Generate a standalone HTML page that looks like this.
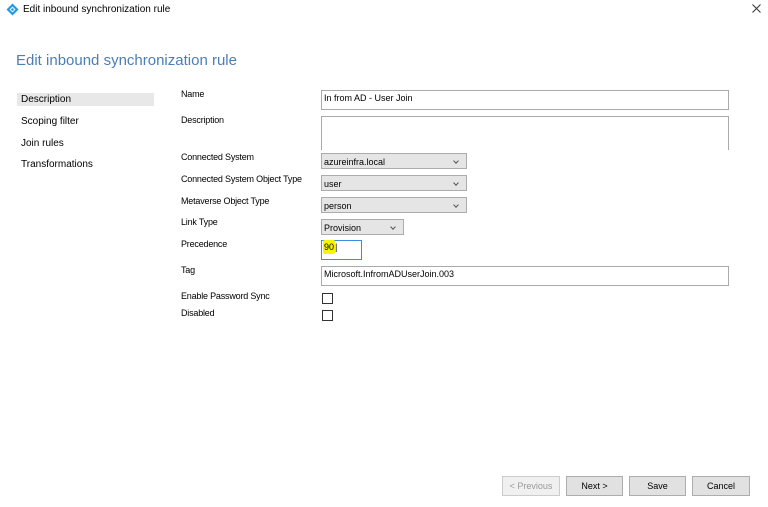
<!DOCTYPE html><html><head><style>
body{margin:0;width:768px;height:507px;background:#fff;font-family:"Liberation Sans",sans-serif;position:relative;overflow:hidden;color:#000}
.a{position:absolute;white-space:nowrap}
.l{font-size:9px;letter-spacing:-0.2px}
.n{font-size:10px}
.box{position:absolute;border:1px solid #aaa;background:#fff;box-sizing:border-box;font-size:9px;padding:2px 2px}
.dd{position:absolute;border:1px solid #acacac;background:#e5e5e5;box-sizing:border-box;font-size:9px;padding:3px 2px}
.dd:after{content:"";position:absolute;right:8px;top:5px;width:3px;height:3px;border-right:1px solid #555;border-bottom:1px solid #555;transform:rotate(45deg)}
.cb{position:absolute;width:11px;height:11px;border:1px solid #333;box-sizing:border-box;left:322px}
.bt{position:absolute;top:476px;height:20px;border:1px solid #adadad;background:#e1e1e1;box-sizing:border-box;font-size:9px;text-align:center;line-height:18px}
</style></head><body>
<svg class="a" style="left:6px;top:3px" width="13" height="13" viewBox="0 0 13 13"><path d="M6.5 0.5L12.5 6.5L6.5 12.5L0.5 6.5Z" fill="#1e9be0"/><path d="M6.5 3.5L9.5 6.5L6.5 9.5L3.5 6.5Z" fill="#fff"/><circle cx="6.5" cy="6.5" r="1.3" fill="#1e9be0"/></svg>
<div class="a" style="left:23px;top:4px;font-size:10px">Edit inbound synchronization rule</div>
<svg class="a" style="left:752px;top:4px" width="9" height="9" viewBox="0 0 9 9"><path d="M0.5 0.5L8.5 8.5M8.5 0.5L0.5 8.5" stroke="#333" stroke-width="1"/></svg>
<div class="a" style="left:16px;top:52px;font-size:15px;color:#4a7fb5">Edit inbound synchronization rule</div>
<div class="a" style="left:17px;top:93px;width:137px;height:13px;background:#e8e8e8"></div>
<div class="a n" style="left:21px;top:94px">Description</div>
<div class="a n" style="left:21px;top:116px">Scoping filter</div>
<div class="a n" style="left:21px;top:138px">Join rules</div>
<div class="a n" style="left:21px;top:159px">Transformations</div>
<div class="a l" style="left:181px;top:89px">Name</div>
<div class="a l" style="left:181px;top:115px">Description</div>
<div class="a l" style="left:181px;top:152px">Connected System</div>
<div class="a l" style="left:181px;top:174px">Connected System Object Type</div>
<div class="a l" style="left:181px;top:196px">Metaverse Object Type</div>
<div class="a l" style="left:181px;top:217px">Link Type</div>
<div class="a l" style="left:181px;top:239px">Precedence</div>
<div class="a l" style="left:181px;top:265px">Tag</div>
<div class="a l" style="left:181px;top:291px">Enable Password Sync</div>
<div class="a l" style="left:181px;top:308px">Disabled</div>
<div class="box" style="left:321px;top:90px;width:408px;height:20px">In from AD - User Join</div>
<div class="box" style="left:321px;top:116px;width:408px;height:34px;border-bottom:none"></div>
<div class="dd" style="left:321px;top:153px;width:146px;height:16px">azureinfra.local</div>
<div class="dd" style="left:321px;top:175px;width:146px;height:16px">user</div>
<div class="dd" style="left:321px;top:197px;width:146px;height:16px">person</div>
<div class="dd" style="left:321px;top:219px;width:83px;height:16px">Provision</div>
<div class="box" style="left:321px;top:240px;width:41px;height:20px;border-color:#3c8de0;padding:1px"><span style="background:#f5f500;padding:2px 1px;border-radius:2px">90</span>|</div>
<div class="box" style="left:321px;top:266px;width:408px;height:20px">Microsoft.InfromADUserJoin.003</div>
<div class="cb" style="top:293px"></div>
<div class="cb" style="top:310px"></div>
<div class="bt" style="left:502px;width:58px;color:#999;background:#f0f0f0;border-color:#ccc">&lt; Previous</div>
<div class="bt" style="left:566px;width:57px">Next &gt;</div>
<div class="bt" style="left:629px;width:57px">Save</div>
<div class="bt" style="left:692px;width:58px">Cancel</div>
</body></html>
